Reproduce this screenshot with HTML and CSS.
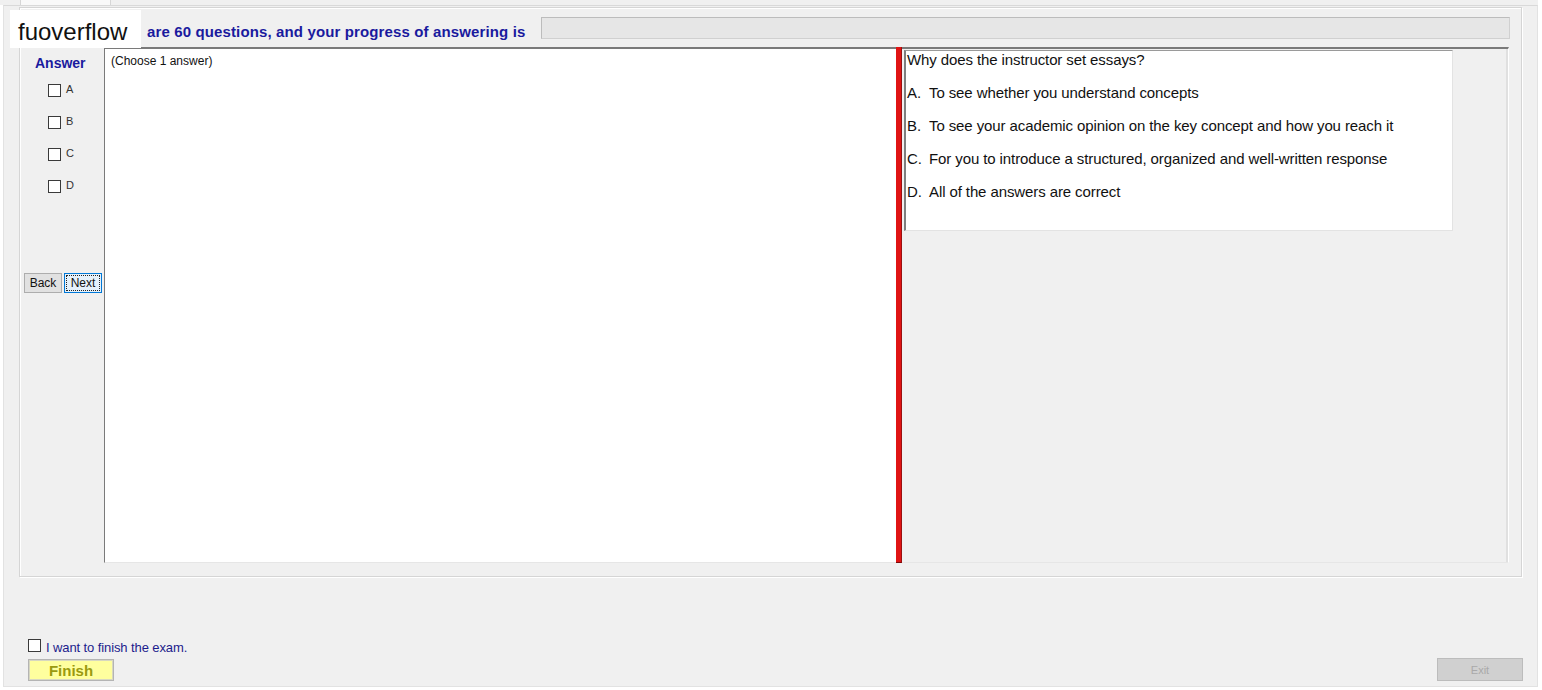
FILE: index.html
```html
<!DOCTYPE html>
<html lang="en">
<head>
<meta charset="utf-8">
<title>Exam</title>
<link rel="stylesheet" href="styles.css">
</head>
<body>
<div class="tabs"><div class="tab"></div></div>
<div class="panel">
  <div class="group">
    <div class="header">
      <div class="header-text">are 60 questions, and your progress of answering is</div>
      <div class="progress"></div>
    </div>
    <div class="content">
      <div class="answer-col">
        <div class="answer-title">Answer</div>
        <label class="opt"><span class="box"></span><span class="opt-label">A</span></label>
        <label class="opt"><span class="box"></span><span class="opt-label">B</span></label>
        <label class="opt"><span class="box"></span><span class="opt-label">C</span></label>
        <label class="opt"><span class="box"></span><span class="opt-label">D</span></label>
        <div class="nav">
          <button class="btn">Back</button>
          <button class="btn btn-focus"><span>Next</span></button>
        </div>
      </div>
      <div class="question-pane">(Choose 1 answer)</div>
      <div class="splitter"></div>
      <div class="right-pane">
        <div class="qbox">
          <p class="qline">Why does the instructor set essays?</p>
          <p class="qline"><span class="letter">A.</span>To see whether you understand concepts</p>
          <p class="qline"><span class="letter">B.</span>To see your academic opinion on the key concept and how you reach it</p>
          <p class="qline"><span class="letter">C.</span>For you to introduce a structured, organized and well-written response</p>
          <p class="qline"><span class="letter">D.</span>All of the answers are correct</p>
        </div>
      </div>
    </div>
  </div>
  <div class="footer">
    <div class="finish-col">
      <label class="finish-check"><span class="box"></span><span class="finish-text">I want to finish the exam.</span></label>
      <button class="finish-btn">Finish</button>
    </div>
    <button class="exit-btn">Exit</button>
  </div>
</div>
<div class="watermark">fuoverflow</div>
</body>
</html>
```
FILE: styles.css
```css
* { box-sizing: border-box; }
html, body { margin: 0; padding: 0; }
body {
  width: 1542px;
  height: 690px;
  overflow: hidden;
  background: #ffffff;
  font-family: "Liberation Sans", Arial, sans-serif;
  position: relative;
}
.tabs {
  width: 1538px;
  height: 5px;
  background: #f0f0f0;
  padding-left: 20px;
}
.tab {
  width: 91px;
  height: 5px;
  background: #f9f9f9;
  border-left: 1px solid #d6d6d6;
  border-right: 1px solid #d6d6d6;
}
.panel {
  margin-left: 3px;
  width: 1535px;
  height: 682px;
  background: #f0f0f0;
  border: 1px solid #e2e2e2;
  border-top-color: #d9d9d9;
  padding: 1px 0 0 15px;
  display: flex;
  flex-direction: column;
}
.group {
  width: 1503px;
  height: 570px;
  border: 1px solid #d5d5d5;
  box-shadow: inset 1px 1px 0 #ffffff, 1px 1px 0 #ffffff;
  padding: 9px 12px 13px 4px;
  display: flex;
  flex-direction: column;
}
.header {
  display: flex;
  align-items: flex-start;
  height: 22px;
  padding-left: 123px;
  margin-right: -1px;
}
.header-text {
  margin-top: 6px;
  font-size: 15px;
  line-height: 17px;
  font-weight: bold;
  color: #1a1a9e;
  white-space: nowrap;
  letter-spacing: 0.13px;
}
.progress {
  flex: 1;
  height: 22px;
  margin-left: 16px;
  background: #e6e6e6;
  border: 1px solid #bcbcbc;
  border-right-color: #d0d0d0;
  border-bottom-color: #d0d0d0;
}
.content {
  margin-top: 8px;
  height: 516px;
  display: flex;
}
.answer-col {
  width: 80px;
  display: flex;
  flex-direction: column;
  padding-top: 8px;
}
.answer-title {
  padding-left: 11px;
  font-size: 14px;
  line-height: 16px;
  font-weight: bold;
  color: #1a1a9e;
}
.opt {
  height: 32px;
  display: flex;
  align-items: center;
  padding-left: 24px;
}
.opt:first-of-type { margin-top: 3px; }
.box {
  width: 13px;
  height: 13px;
  background: #ffffff;
  border: 1px solid #3a3a3a;
  flex: none;
}
.opt-label {
  margin-left: 5px;
  font-size: 11px;
  color: #333333;
  margin-top: -2px;
}
.nav {
  margin-top: 71px;
  display: flex;
  gap: 2px;
}
.btn {
  width: 38px;
  height: 20px;
  padding: 0;
  font-family: "Liberation Sans", Arial, sans-serif;
  font-size: 12px;
  color: #111111;
  background: #e1e1e1;
  border: 1px solid #adadad;
}
.btn-focus {
  border: 1px solid #0078d7;
  background: #e5f1fb;
  padding: 1px;
}
.btn-focus span {
  display: block;
  height: 16px;
  line-height: 14px;
  border: 1px dotted #222222;
}
.question-pane {
  width: 792px;
  background: #ffffff;
  border-top: 2px solid #7a7a7a;
  border-left: 1px solid #7a7a7a;
  border-bottom: 1px solid #e6e6e6;
  padding: 5px 0 0 6px;
  font-size: 12px;
  line-height: 14px;
  color: #111111;
}
.splitter {
  width: 6px;
  background: #e01414;
  border-right: 1px solid #9a1010;
  border-bottom: 1px solid #7a0a0a;
}
.right-pane {
  flex: 1;
  border-top: 2px solid #7a7a7a;
  border-right: 1px solid #ffffff;
  border-bottom: 1px solid #e6e6e6;
  box-shadow: inset -2px 0 0 #e0e0e0;
  padding: 1px 0 0 2px;
}
.qbox {
  width: 549px;
  height: 181px;
  background: #ffffff;
  border-left: 2px solid #7f7f7f;
  border-top: 1px solid #9a9a9a;
  border-right: 1px solid #e3e3e3;
  border-bottom: 1px solid #e3e3e3;
  padding: 0 0 0 1px;
}
.qline {
  margin: 0 0 15px 0;
  font-size: 15px;
  line-height: 18px;
  color: #111111;
  white-space: nowrap;
  letter-spacing: -0.1px;
}
.letter {
  display: inline-block;
  width: 22px;
}
.footer {
  flex: 1;
  display: flex;
  justify-content: space-between;
  align-items: flex-end;
  padding: 0 14px 5px 9px;
}
.finish-col {
  display: flex;
  flex-direction: column;
  align-items: flex-start;
}
.finish-check {
  display: flex;
  align-items: center;
  height: 16px;
  margin-bottom: 6px;
}
.finish-check .box {
  width: 13px;
  height: 13px;
}
.finish-text {
  margin-left: 5px;
  margin-top: 5px;
  font-size: 13px;
  color: #1c1c8c;
  letter-spacing: -0.1px;
}
.finish-btn {
  width: 86px;
  height: 22px;
  padding: 0;
  background: #ffff9e;
  border: 1px solid #b4b4b4;
  box-shadow: inset 0 0 0 1px #d8d8c0;
  font-family: "Liberation Sans", Arial, sans-serif;
  font-size: 15px;
  font-weight: bold;
  color: #9a9a10;
}
.exit-btn {
  width: 86px;
  height: 23px;
  padding: 0;
  background: #d0d0d0;
  border: 1px solid #bcbcbc;
  font-family: "Liberation Sans", Arial, sans-serif;
  font-size: 11px;
  color: #a9a9a9;
}
.watermark {
  position: absolute;
  left: 10px;
  top: 10px;
  width: 131px;
  height: 38px;
  background: #ffffff;
  padding: 3px 0 0 8px;
  font-size: 24px;
  line-height: 38px;
  color: #111111;
  overflow: hidden;
}
```
